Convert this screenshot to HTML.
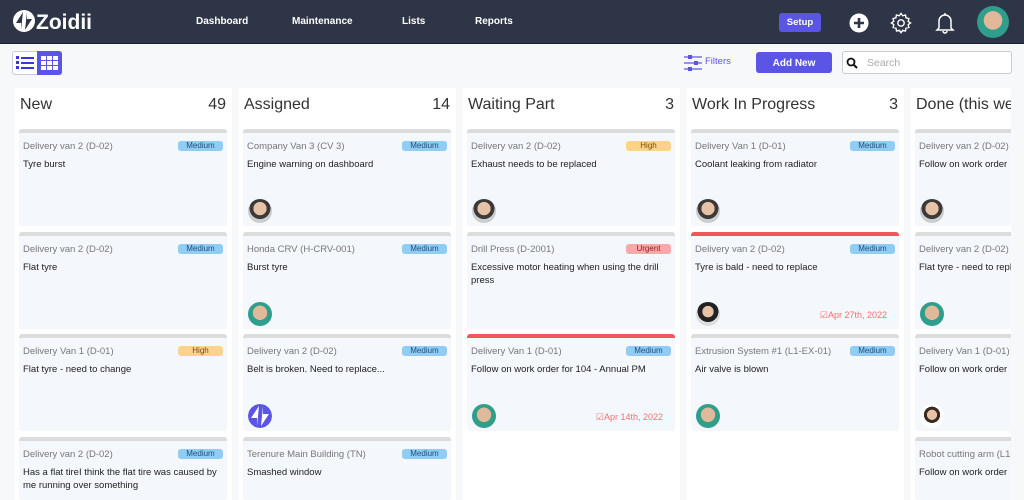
<!DOCTYPE html>
<html><head><meta charset="utf-8"><style>
*{box-sizing:border-box;margin:0;padding:0}
html,body{width:1024px;height:500px;overflow:hidden}
body{background:#f7f8fa;font-family:"Liberation Sans",sans-serif;position:relative}
.hdr{position:absolute;left:0;top:0;width:1024px;height:44px;background:#2d3546;border-bottom:1px solid #1b2130}
.nav{position:absolute;top:16px;color:#fff;font-size:10px;font-weight:bold}
.logo{position:absolute;left:12px;top:9px;color:#fff;font-size:21px;font-weight:bold}
.setup{position:absolute;left:779px;top:13px;width:42px;height:19px;background:#5b55e6;border-radius:3px;color:#fff;font-size:9.5px;font-weight:bold;text-align:center;line-height:19px}
.col{position:absolute;top:88px;width:217px;height:412px;background:#fff;overflow:hidden}
.ch{position:absolute;top:8px;left:5px;right:6px;font-size:16px;color:#333}
.ch span{float:right}
.card{position:absolute;left:4px;width:208px;height:97px;background:#f4f7fb;border-top:4px solid #dcdcdc;border-radius:3px}
.card.red{border-top-color:#f0575a}
.t{position:absolute;left:4px;top:8px;font-size:9.5px;color:#777;white-space:nowrap}
.d{position:absolute;left:4px;top:26px;width:200px;font-size:9.5px;color:#222;line-height:12.5px}
.b{position:absolute;right:4px;top:8px;width:45px;height:10px;border-radius:3px;font-size:8px;text-align:center;line-height:10px}
.m{background:#8fcdf5;color:#1f4f7a}.h{background:#fdd38a;color:#7a4b00}.u{background:#f8a9a9;color:#8b1f1f}
.av{position:absolute;left:5px;top:66px;width:24px;height:24px;border-radius:50%;background:radial-gradient(circle at 50% 40%,#e6c3a6 0 35%,#3a3a3a 36% 55%,#ccc 56%)}
.av.g{background:radial-gradient(circle at 50% 45%,#e0b89a 0 40%,#2f9e8a 41%)}
.dt{position:absolute;right:12px;top:74px;font-size:9px;color:#f07070}
</style></head><body>
<div class="hdr">
<div class="logo"><svg width="24" height="24" viewBox="0 0 24 24" style="vertical-align:-4px"><circle cx="12" cy="12" r="11" fill="#fff"/><path d="M11 3 L4 14 H9 V21 Z M13 21 L20 10 H15 V3 Z" fill="#2d3546"/></svg>Zoidii</div>
<div class="nav" style="left:196px">Dashboard</div>
<div class="nav" style="left:292px">Maintenance</div>
<div class="nav" style="left:402px">Lists</div>
<div class="nav" style="left:475px">Reports</div>
<div class="setup">Setup</div>
<svg style="position:absolute;left:849px;top:13px" width="20" height="20"><circle cx="10" cy="10" r="9.5" fill="#fff"/><path d="M10 5v10M5 10h10" stroke="#2d3546" stroke-width="2.6"/></svg>
<svg style="position:absolute;left:890px;top:12px" width="22" height="22" viewBox="0 0 24 24" fill="none" stroke="#fff" stroke-width="1.5"><circle cx="12" cy="12" r="3.5"/><path d="M12 1.5l1.8 2.6 3.1-.8.6 3.1 3.1.7-.8 3.1 2.6 1.8-2.6 1.8.8 3.1-3.1.7-.6 3.1-3.1-.8L12 22.5l-1.8-2.6-3.1.8-.6-3.1-3.1-.7.8-3.1L1.5 12l2.6-1.8-.8-3.1 3.1-.7.6-3.1 3.1.8z"/></svg>
<svg style="position:absolute;left:935px;top:12px" width="20" height="22" viewBox="0 0 20 22" fill="none" stroke="#fff" stroke-width="1.5"><path d="M4 16V9a6 6 0 0112 0v7l2 2H2z"/><path d="M8 19a2 2 0 004 0"/><path d="M10 1v2"/></svg>
<div style="position:absolute;left:977px;top:6px;width:32px;height:32px;border-radius:50%;background:radial-gradient(circle at 50% 45%,#e2b89a 0 38%,#2f9e8a 40%)"></div>
</div>
<div style="position:absolute;left:12px;top:51px;width:50px;height:24px;border:1px solid #c9c9e8;border-radius:3px;background:#fff"></div>
<svg style="position:absolute;left:15px;top:54px" width="20" height="18"><g fill="#3b36d9"><rect x="6" y="3" width="13" height="2"/><rect x="6" y="8" width="13" height="2"/><rect x="6" y="13" width="13" height="2"/><rect x="1" y="2" width="3" height="3"/><rect x="1" y="7" width="3" height="3"/><rect x="1" y="12" width="3" height="3"/></g></svg>
<div style="position:absolute;left:37px;top:51px;width:25px;height:24px;background:#5b55e6;border-radius:0 3px 3px 0"></div>
<svg style="position:absolute;left:40px;top:55px" width="19" height="16"><g fill="#fff"><rect x="1" y="1" width="5" height="4"/><rect x="7" y="1" width="5" height="4"/><rect x="13" y="1" width="5" height="4"/><rect x="1" y="6" width="5" height="4"/><rect x="7" y="6" width="5" height="4"/><rect x="13" y="6" width="5" height="4"/><rect x="1" y="11" width="5" height="4"/><rect x="7" y="11" width="5" height="4"/><rect x="13" y="11" width="5" height="4"/></g></svg>
<svg style="position:absolute;left:683px;top:54px" width="20" height="18"><g stroke="#5b55e6" stroke-width="1.3"><path d="M1 3h18M1 9h18M1 15h18"/></g><g fill="#5b55e6"><rect x="5" y="1" width="4" height="4"/><rect x="11" y="7" width="4" height="4"/><rect x="5" y="13" width="4" height="4"/></g></svg>
<div style="position:absolute;left:705px;top:56px;font-size:9.5px;color:#5b55e6">Filters</div>
<div style="position:absolute;left:756px;top:52px;width:76px;height:21px;background:#5b55e6;border-radius:3px;color:#fff;font-size:10px;font-weight:bold;text-align:center;line-height:21px;padding-top:1px">Add New</div>
<div style="position:absolute;left:842px;top:51px;width:170px;height:23px;border:1px solid #ccc;border-radius:3px;background:#fff"></div>
<svg style="position:absolute;left:846px;top:57px" width="12" height="12"><circle cx="5" cy="5" r="3.5" fill="none" stroke="#111" stroke-width="1.8"/><path d="M8 8l3 3" stroke="#111" stroke-width="2"/></svg>
<div style="position:absolute;left:867px;top:57px;font-size:10.5px;color:#aaa">Search</div>

<div class="col" style="left:15px"><div class="ch">New<span>49</span></div>
<div class="card" style="top:41px"><div class="t">Delivery van 2 (D-02)</div><div class="b m">Medium</div><div class="d">Tyre burst</div></div>
<div class="card" style="top:144px"><div class="t">Delivery van 2 (D-02)</div><div class="b m">Medium</div><div class="d">Flat tyre</div></div>
<div class="card" style="top:246px"><div class="t">Delivery Van 1 (D-01)</div><div class="b h">High</div><div class="d">Flat tyre - need to change</div></div>
<div class="card" style="top:349px;height:63px"><div class="t">Delivery van 2 (D-02)</div><div class="b m">Medium</div><div class="d">Has a flat tireI think the flat tire was caused by me running over something</div></div>
</div>
<div class="col" style="left:239px"><div class="ch">Assigned<span>14</span></div>
<div class="card" style="top:41px"><div class="t">Company Van 3 (CV 3)</div><div class="b m">Medium</div><div class="d">Engine warning on dashboard</div><div class="av"></div></div>
<div class="card" style="top:144px"><div class="t">Honda CRV (H-CRV-001)</div><div class="b m">Medium</div><div class="d">Burst tyre</div><div class="av g"></div></div>
<div class="card" style="top:246px"><div class="t">Delivery van 2 (D-02)</div><div class="b m">Medium</div><div class="d">Belt is broken. Need to replace...</div><svg class="av" style="background:none" width="24" height="24" viewBox="0 0 24 24"><circle cx="12" cy="12" r="12" fill="#5b55e6"/><path d="M11 2 L3 14 H9 V22 Z M13 22 L21 10 H15 V2 Z" fill="#fff"/></svg></div>
<div class="card" style="top:349px;height:63px"><div class="t">Terenure Main Building (TN)</div><div class="b m">Medium</div><div class="d">Smashed window</div></div>
</div>
<div class="col" style="left:463px"><div class="ch">Waiting Part<span>3</span></div>
<div class="card" style="top:41px"><div class="t">Delivery van 2 (D-02)</div><div class="b h">High</div><div class="d">Exhaust needs to be replaced</div><div class="av"></div></div>
<div class="card" style="top:144px"><div class="t">Drill Press (D-2001)</div><div class="b u">Urgent</div><div class="d">Excessive motor heating when using the drill press</div></div>
<div class="card red" style="top:246px"><div class="t">Delivery Van 1 (D-01)</div><div class="b m">Medium</div><div class="d">Follow on work order for 104 - Annual PM</div><div class="av g"></div><div class="dt">☑Apr 14th, 2022</div></div>
</div>
<div class="col" style="left:687px"><div class="ch">Work In Progress<span>3</span></div>
<div class="card" style="top:41px"><div class="t">Delivery Van 1 (D-01)</div><div class="b m">Medium</div><div class="d">Coolant leaking from radiator</div><div class="av"></div></div>
<div class="card red" style="top:144px"><div class="t">Delivery van 2 (D-02)</div><div class="b m">Medium</div><div class="d">Tyre is bald - need to replace</div><div class="av" style="background:radial-gradient(circle at 50% 40%,#e6c3a6 0 30%,#222 31% 55%,#ddd 56%)"></div><div class="dt">☑Apr 27th, 2022</div></div>
<div class="card" style="top:246px"><div class="t">Extrusion System #1 (L1-EX-01)</div><div class="b m">Medium</div><div class="d">Air valve is blown</div><div class="av g"></div></div>
</div>
<div class="col" style="left:911px;width:100px"><div class="ch" style="right:auto;white-space:nowrap">Done (this week)</div>
<div class="card" style="top:41px"><div class="t">Delivery van 2 (D-02)</div><div class="d">Follow on work order</div><div class="av"></div></div>
<div class="card" style="top:144px"><div class="t">Delivery van 2 (D-02)</div><div class="d">Flat tyre - need to replace</div><div class="av g"></div></div>
<div class="card" style="top:246px"><div class="t">Delivery Van 1 (D-01)</div><div class="d">Follow on work order</div><div class="av" style="background:radial-gradient(circle at 50% 45%,#e6c3a6 0 28%,#3a2a20 29% 45%,#fff 46%)"></div></div>
<div class="card" style="top:349px;height:63px"><div class="t">Robot cutting arm (L1-EX-01)</div><div class="d">Follow on work order</div></div>
</div>
</body></html>
